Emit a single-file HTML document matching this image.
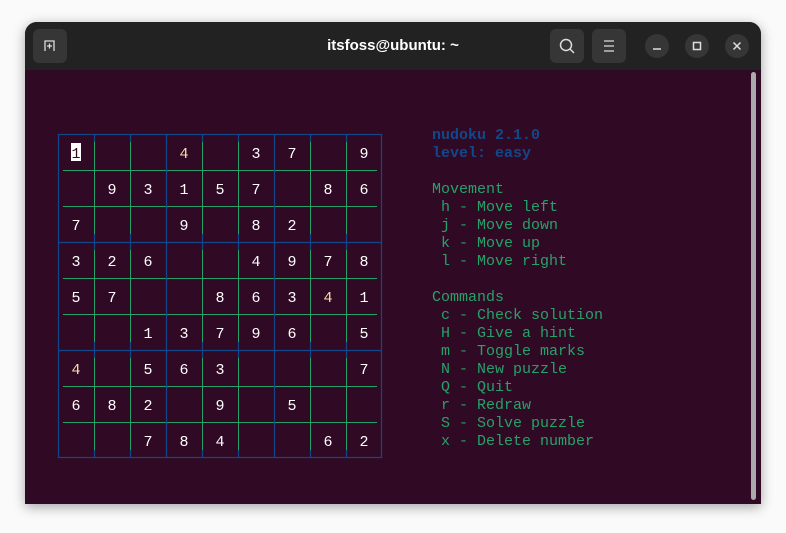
<!DOCTYPE html>
<html><head><style>
body{margin:0;width:786px;height:533px;background:#fafafa;position:relative;overflow:hidden;font-family:"Liberation Sans",sans-serif}
.win{position:absolute;left:25px;top:22px;width:736px;height:482px;border-radius:12px 12px 0 0;overflow:hidden;box-shadow:0 3px 12px rgba(0,0,0,.35);background:#300a24}
.hdr{position:absolute;left:0;top:0;width:736px;height:48px;background:#222}
.title{position:absolute;left:0;width:736px;top:15px;text-align:center;color:#fff;font-weight:bold;font-size:15px}
.btn{position:absolute;top:7px;width:34px;height:34px;border-radius:6px;background:#363636}
.cb{position:absolute;top:12px;width:24px;height:24px;border-radius:50%;background:#363636}
.txt{position:absolute;left:407px;top:105px;font-family:"Liberation Mono",monospace;font-size:15px;line-height:18px;color:#26a269;white-space:pre}
.b{color:#12488b;font-weight:bold}
.sb{position:absolute;left:726px;top:50px;width:5px;height:428px;background:#aaa;border-radius:3px}
</style></head><body>
<div class="win">
<div class="hdr">
<div class="btn" style="left:8px"><svg width="34" height="34"><path d="M12 22V12h9v10M16.5 14.5v5M14 17h5" stroke="#ddd" stroke-width="1.3" fill="none"/></svg></div>
<div class="title">itsfoss@ubuntu: ~</div>
<div class="btn" style="left:525px"><svg width="34" height="34"><circle cx="16" cy="16" r="5.5" stroke="#ddd" stroke-width="1.5" fill="none"/><path d="M20 20l4 4" stroke="#ddd" stroke-width="1.5"/></svg></div>
<div class="btn" style="left:567px"><svg width="34" height="34"><path d="M12 12h10M12 17h10M12 22h10" stroke="#ddd" stroke-width="1.3"/></svg></div>
<div class="cb" style="left:620px"><svg width="24" height="24"><path d="M8 15h8" stroke="#ddd" stroke-width="1.5"/></svg></div>
<div class="cb" style="left:660px"><svg width="24" height="24"><rect x="8.5" y="8.5" width="7" height="7" stroke="#ddd" stroke-width="1.5" fill="none"/></svg></div>
<div class="cb" style="left:700px"><svg width="24" height="24"><path d="M8.5 8.5l7 7M15.5 8.5l-7 7" stroke="#ddd" stroke-width="1.5"/></svg></div>
</div>
<svg style="position:absolute;left:0;top:0" width="736" height="482">
<g transform="translate(33,112)" font-family="Liberation Mono,monospace" font-size="15" text-anchor="middle">
<g stroke="#26a269" stroke-width="1">
<path d="M36.5 0v324M72.5 0v324M144.5 0v324M180.5 0v324M252.5 0v324M288.5 0v324M5 36.5h314M5 72.5h314M5 144.5h314M5 180.5h314M5 252.5h314M5 288.5h314"/>
</g>
<g stroke="#12488b" stroke-width="1.2" fill="none">
<rect x="0.5" y="0.5" width="323" height="323"/>
<path d="M0 108.5h324M0 216.5h324M108.5 0v324M216.5 0v324"/>
<path d="M36.5 0v8M72.5 0v8M144.5 0v8M180.5 0v8M252.5 0v8M288.5 0v8M36.5 100v16M72.5 100v16M144.5 100v16M180.5 100v16M252.5 100v16M288.5 100v16M36.5 208v16M72.5 208v16M144.5 208v16M180.5 208v16M252.5 208v16M288.5 208v16M36.5 316v8M72.5 316v8M144.5 316v8M180.5 316v8M252.5 316v8M288.5 316v8"/>
</g>
<rect x="13" y="9" width="10" height="18" fill="#fff"/>
<g fill="#fff">
<text x="18" y="24" fill="#300a24">1</text><text x="126" y="24" fill="#f6dfb0">4</text><text x="198" y="24">3</text><text x="234" y="24">7</text><text x="306" y="24">9</text>
<text x="54" y="60">9</text><text x="90" y="60">3</text><text x="126" y="60">1</text><text x="162" y="60">5</text><text x="198" y="60">7</text><text x="270" y="60">8</text><text x="306" y="60">6</text>
<text x="18" y="96">7</text><text x="126" y="96">9</text><text x="198" y="96">8</text><text x="234" y="96">2</text>
<text x="18" y="132">3</text><text x="54" y="132">2</text><text x="90" y="132">6</text><text x="198" y="132">4</text><text x="234" y="132">9</text><text x="270" y="132">7</text><text x="306" y="132">8</text>
<text x="18" y="168">5</text><text x="54" y="168">7</text><text x="162" y="168">8</text><text x="198" y="168">6</text><text x="234" y="168">3</text><text x="270" y="168" fill="#f6dfb0">4</text><text x="306" y="168">1</text>
<text x="90" y="204">1</text><text x="126" y="204">3</text><text x="162" y="204">7</text><text x="198" y="204">9</text><text x="234" y="204">6</text><text x="306" y="204">5</text>
<text x="18" y="240" fill="#f6dfb0">4</text><text x="90" y="240">5</text><text x="126" y="240">6</text><text x="162" y="240">3</text><text x="306" y="240">7</text>
<text x="18" y="276">6</text><text x="54" y="276">8</text><text x="90" y="276">2</text><text x="162" y="276">9</text><text x="234" y="276">5</text>
<text x="90" y="312">7</text><text x="126" y="312">8</text><text x="162" y="312">4</text><text x="270" y="312">6</text><text x="306" y="312">2</text>
</g></g></svg>
<div class="txt"><span class="b">nudoku 2.1.0
level: easy</span>

Movement
 h - Move left
 j - Move down
 k - Move up
 l - Move right

Commands
 c - Check solution
 H - Give a hint
 m - Toggle marks
 N - New puzzle
 Q - Quit
 r - Redraw
 S - Solve puzzle
 x - Delete number</div>
<div class="sb"></div>
</div>
</body></html>
